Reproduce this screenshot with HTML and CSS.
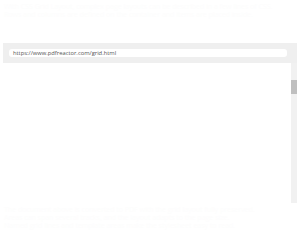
FILE: index.html
```html
<!DOCTYPE html>
<html lang="en">
<head>
  <meta charset="UTF-8" />
  <meta name="viewport" content="width=device-width, initial-scale=1.0" />
  <title>Grid preview</title>
  <link rel="stylesheet" href="styles.css">
</head>
<body>

  <div class="ghost-text top">
    <p>With CSS Grid Layout, complex page layouts can be described in a few lines of CSS.</p>
    <p>Rows and columns are defined on the container and items are placed inside.</p>
  </div>

  <div class="browser">
    <div class="toolbar">
      <div class="url-field">https://www.pdfreactor.com/grid.html</div>
    </div>
    <div class="viewport">
      <div class="page"></div>
      <div class="scrollbar">
        <div class="thumb"></div>
      </div>
    </div>
  </div>

  <div class="ghost-text bottom">
    <p>The document above is converted to PDF with the grid layout fully preserved.</p>
    <p>Areas can span several tracks, and the layout adapts to the page size.</p>
    <p>Named grid lines and template areas make the stylesheet easy to read.</p>
  </div>

</body>
</html>
```

FILE: styles.css
```css
body {
  font-family: "Open Sans", "Liberation Sans", sans-serif;
  background: #fff;
  margin: 0;
  padding: 0;
}

.ghost-text {
  color: #fdfdfd;
  font-size: 7px;
  line-height: 8px;
  padding: 3px 4px 0;
}

.ghost-text p {
  margin: 0;
}

.ghost-text.top {
  height: 40px;
}

.ghost-text.bottom {
  height: 46px;
}

.browser {
  margin: 0 3px;
  width: 294px;
}

.toolbar {
  background: #efefef;
  height: 20px;
  padding: 6px 10px 6px 6px;
  box-sizing: border-box;
}

.url-field {
  background: #fff;
  border-radius: 3px;
  height: 8px;
  line-height: 8px;
  font-size: 5.8px;
  color: #555;
  padding-left: 4px;
}

.viewport {
  display: flex;
  height: 140px;
}

.page {
  flex: 1;
  background: #fff;
}

.scrollbar {
  width: 6px;
  background: #f1f1f1;
  padding-top: 17px;
}

.thumb {
  height: 14px;
  background: #bfbfbf;
}
```
